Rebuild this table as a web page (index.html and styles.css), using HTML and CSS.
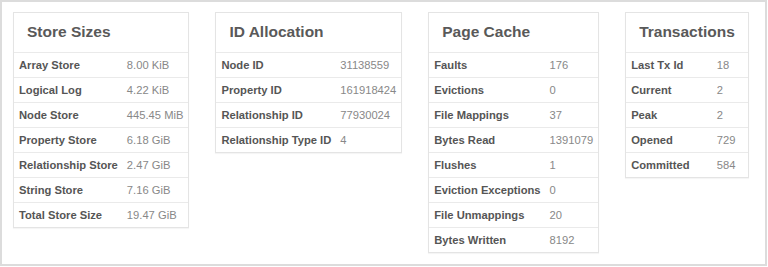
FILE: index.html
```html
<!DOCTYPE html>
<html>
<head>
<meta charset="utf-8">
<link rel="stylesheet" href="styles.css">
</head>
<body>
<div class="frame">
  <div class="card">
    <h2 class="card-title">Store Sizes</h2>
    <table class="stats">
      <tr><th>Array Store</th><td>8.00 KiB</td></tr>
      <tr><th>Logical Log</th><td>4.22 KiB</td></tr>
      <tr><th>Node Store</th><td>445.45 MiB</td></tr>
      <tr><th>Property Store</th><td>6.18 GiB</td></tr>
      <tr><th>Relationship Store</th><td>2.47 GiB</td></tr>
      <tr><th>String Store</th><td>7.16 GiB</td></tr>
      <tr><th>Total Store Size</th><td>19.47 GiB</td></tr>
    </table>
  </div>
  <div class="card">
    <h2 class="card-title">ID Allocation</h2>
    <table class="stats">
      <tr><th>Node ID</th><td>31138559</td></tr>
      <tr><th>Property ID</th><td>161918424</td></tr>
      <tr><th>Relationship ID</th><td>77930024</td></tr>
      <tr><th>Relationship Type ID</th><td>4</td></tr>
    </table>
  </div>
  <div class="card">
    <h2 class="card-title">Page Cache</h2>
    <table class="stats">
      <tr><th>Faults</th><td>176</td></tr>
      <tr><th>Evictions</th><td>0</td></tr>
      <tr><th>File Mappings</th><td>37</td></tr>
      <tr><th>Bytes Read</th><td>1391079</td></tr>
      <tr><th>Flushes</th><td>1</td></tr>
      <tr><th>Eviction Exceptions</th><td>0</td></tr>
      <tr><th>File Unmappings</th><td>20</td></tr>
      <tr><th>Bytes Written</th><td>8192</td></tr>
    </table>
  </div>
  <div class="card">
    <h2 class="card-title">Transactions</h2>
    <table class="stats">
      <tr><th>Last Tx Id</th><td>18</td></tr>
      <tr><th>Current</th><td>2</td></tr>
      <tr><th>Peak</th><td>2</td></tr>
      <tr><th>Opened</th><td>729</td></tr>
      <tr><th>Committed</th><td>584</td></tr>
    </table>
  </div>
</div>
</body>
</html>
```
FILE: styles.css
```css
html, body {
  margin: 0;
  padding: 0;
  background: #ffffff;
}
body {
  font-family: "Liberation Sans", Arial, sans-serif;
  width: 768px;
  height: 267px;
}
.frame {
  box-sizing: border-box;
  width: 767px;
  height: 266px;
  border: 2px solid #dcdcdc;
  padding: 10px 11px;
  display: flex;
  align-items: flex-start;
  gap: 26px;
}
.card {
  border: 1px solid #e4e4e4;
  background: #fff;
  box-shadow: 0 1px 1px rgba(0,0,0,0.04);
}
.card-title {
  margin: 0;
  height: 39px;
  line-height: 37px;
  padding: 0 13px 2px;
  box-sizing: border-box;
  font-size: 15.5px;
  font-weight: bold;
  color: #595959;
  white-space: nowrap;
}
.stats {
  border-collapse: collapse;
  width: 100%;
  font-size: 11.2px;
}
.stats th, .stats td {
  border-top: 1px solid #eaeaea;
  height: 24px;
  padding: 0 5px;
  text-align: left;
  white-space: nowrap;
  vertical-align: middle;
}
.stats th {
  font-weight: bold;
  color: #555;
}
.stats td {
  color: #888;
  padding-left: 4px;
}
```
